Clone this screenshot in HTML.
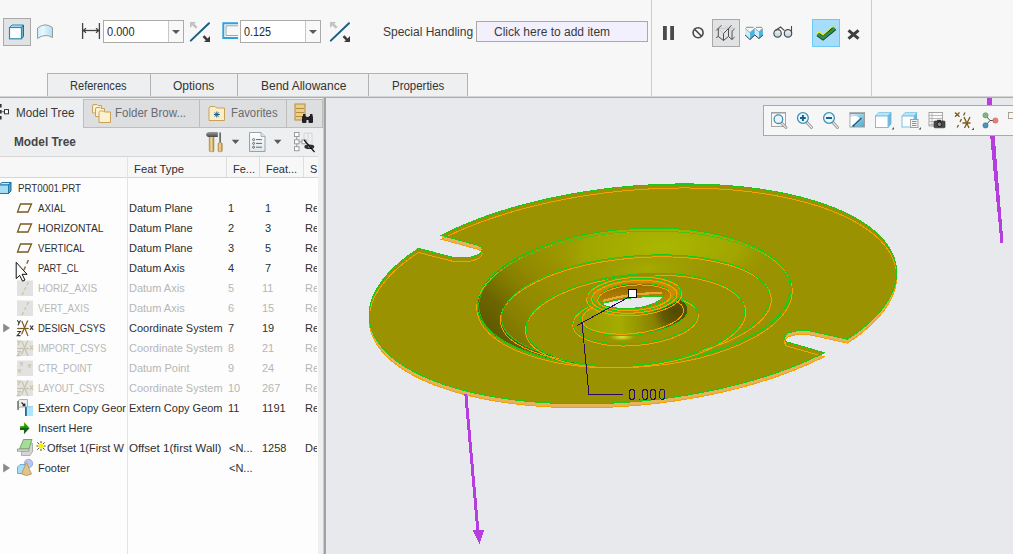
<!DOCTYPE html>
<html><head><meta charset="utf-8">
<style>
*{box-sizing:border-box;margin:0;padding:0}
html,body{width:1013px;height:554px;overflow:hidden;background:#f7f7f7;font-family:"Liberation Sans",sans-serif;color:#333;position:relative}
.a{position:absolute}
.t{position:absolute;white-space:nowrap;line-height:1}
svg{position:absolute;overflow:visible}
.inp{position:absolute;background:#fff;border:1px solid #ababab;height:23px}
.dd{position:absolute;top:0;right:0;width:15px;height:21px;border-left:1px solid #c8c8c8;background:#f8f8f8}
.dd:after{content:"";position:absolute;left:3px;top:9px;border-left:4px solid transparent;border-right:4px solid transparent;border-top:4px solid #5a5a5a}
.tab{position:absolute;top:73px;height:24px;background:#eeeff1;border:1px solid #b3b3b3;border-bottom:none}
</style></head><body>
<!-- ribbon left group -->
<div class="a" style="left:3px;top:18px;width:28px;height:28px;background:#e1e2e4;border:1px solid #a9a9a9"></div>
<svg width="1013" height="60" style="left:0;top:0">
  <!-- solid cube -->
  <path d="M9.5 27.5 L12 25 L23.5 25 L21.5 27.5 Z" fill="#b6e4f7" stroke="#2b8ab9" stroke-width="1"/>
  <path d="M21.5 27.5 L23.5 25 L23.5 36.5 L21.5 38.8 Z" fill="#6fb8d8" stroke="#1f6f98" stroke-width="1"/>
  <rect x="9.5" y="27.5" width="12" height="11.3" fill="#fff" stroke="#2b8ab9" stroke-width="1.2"/>
  <!-- surface -->
  <defs><linearGradient id="sg" x1="0" x2="1"><stop offset="0" stop-color="#c4ecfa"/><stop offset=".35" stop-color="#e9f8fd"/><stop offset="1" stop-color="#a9e0f5"/></linearGradient></defs>
  <path d="M37.5 28 Q45 22 52.5 27.5 L52.5 37.5 Q45 33 37.5 38.5 Z" fill="url(#sg)" stroke="#9a9a9a" stroke-width="1"/>
  <!-- dimension |<->| -->
  <g stroke="#444" stroke-width="1.3" fill="none">
    <line x1="82.6" y1="23" x2="82.6" y2="39"/>
    <line x1="99.4" y1="23" x2="99.4" y2="39"/>
    <line x1="83" y1="30.5" x2="99" y2="30.5"/>
    <path d="M86 28.2 L83.3 30.5 L86 32.8"/>
    <path d="M96 28.2 L98.7 30.5 L96 32.8"/>
  </g>
  <!-- flip icon 1 -->
  <g>
    <line x1="190.8" y1="40.6" x2="209" y2="23.2" stroke="#1b5f80" stroke-width="2" stroke-linecap="round"/>
    <path d="M190 22 L196 22 L194.3 23.7 L197.5 27 L195.7 28.8 L192.4 25.5 L190 28 Z" fill="#c2c2c2"/>
    <path d="M210 42 L204 42 L205.8 40.2 L202.6 37 L204.4 35.2 L207.6 38.4 L210 36 Z" fill="#3c3c3c"/>
  </g>
  <!-- thickness icon -->
  <path d="M238 23.3 L223.3 23.3 L223.3 38 L238 38" fill="none" stroke="#2aa3de" stroke-width="1.9"/>
  <path d="M238 25.8 L226 25.8 L226 35.5 L238 35.5" fill="none" stroke="#a5a5a5" stroke-width="1"/>
  <!-- flip icon 2 -->
  <g transform="translate(140 0)">
    <line x1="190.8" y1="40.6" x2="209" y2="23.2" stroke="#1b5f80" stroke-width="2" stroke-linecap="round"/>
    <path d="M190 22 L196 22 L194.3 23.7 L197.5 27 L195.7 28.8 L192.4 25.5 L190 28 Z" fill="#c2c2c2"/>
    <path d="M210 42 L204 42 L205.8 40.2 L202.6 37 L204.4 35.2 L207.6 38.4 L210 36 Z" fill="#3c3c3c"/>
  </g>
</svg>
<div class="inp" style="left:103px;top:20px;width:81px"><div class="dd"></div></div>
<div class="t" style="left:107px;top:26px;font-size:12px;color:#2a2a2a;transform:scaleX(.92);transform-origin:0 0">0.000</div>
<div class="inp" style="left:240px;top:20px;width:81px"><div class="dd"></div></div>
<div class="t" style="left:244px;top:26px;font-size:12px;color:#2a2a2a;transform:scaleX(.9);transform-origin:0 0">0.125</div>
<div class="t" style="left:383px;top:26px;font-size:12px;color:#3a3a3a">Special Handling</div>
<div class="a" style="left:476px;top:21px;width:172px;height:21px;background:#f3f0fd;border:1px solid #a9a9a9"></div>
<div class="t" style="left:494px;top:26px;font-size:12px;color:#3a3a3a">Click here to add item</div>
<div class="a" style="left:651px;top:0;width:1px;height:96px;background:#cdcdcd"></div>
<div class="a" style="left:871px;top:0;width:1px;height:96px;background:#cdcdcd"></div>
<!-- right group -->
<div class="a" style="left:712px;top:19px;width:28px;height:28px;background:#e1e2e4;border:1px solid #a9a9a9"></div>
<div class="a" style="left:812px;top:19px;width:28px;height:28px;background:#a6ddfa;border:1px solid #6cc8f4"></div>
<svg width="1013" height="60" style="left:0;top:0">
  <rect x="663" y="26" width="3.8" height="14" fill="#4a4a4a"/>
  <rect x="670.2" y="26" width="3.8" height="14" fill="#4a4a4a"/>
  <circle cx="698.1" cy="32.7" r="5" fill="none" stroke="#4a4a4a" stroke-width="1.6"/>
  <line x1="694.6" y1="29.2" x2="701.6" y2="36.2" stroke="#4a4a4a" stroke-width="1.6"/>
  <!-- wireframe icon -->
  <g stroke="#c4c4c4" stroke-width=".8" fill="none">
    <path d="M716.4 28.3 L734.6 28.3 M718.3 28.5 L723.5 33.5 M725 25.2 L729 29 M728.5 28.5 L732 31.3"/>
  </g>
  <g stroke="#505050" stroke-width="1" fill="none">
    <path d="M718.3 28.8 L718.3 36.5 L723.5 40.5 L728.5 36.5 L728.5 28.5 L723.5 33.5 L723.5 40.5"/>
    <path d="M716.2 30.5 L721.5 25.2 M728.5 28.5 L731.5 25.2 M716.2 37.8 L718.3 36.3 M728.5 36.5 L732 39.5 L732 31.3 L734.6 29 M732 39.5 L734.6 37"/>
  </g>
  <!-- blue icon -->
  <path d="M745.1 28.2 L750 32.6 L750 39.6 L745.1 35 Z" fill="#c6eefb"/>
  <path d="M750 32.6 L754.8 28.2 L754.8 35 L750 39.6 Z" fill="#46b6e8"/>
  <path d="M754.8 28.2 L759 31.8 L759 38.6 L754.8 35 Z" fill="#c6eefb"/>
  <path d="M759 31.8 L762.9 28.2 L762.9 35 L759 38.6 Z" fill="#46b6e8"/>
  <path d="M745.1 28.2 L750 32.6 L754.8 28.2 L759 31.8 L762.9 28.2" fill="none" stroke="#9a8c88" stroke-width=".7"/>
  <path d="M745.1 35 L750 39.6 L754.8 35 L759 38.6 L762.9 35" fill="none" stroke="#3a3a3a" stroke-width="1"/>
  <path d="M746 27.3 L753.5 27.3 M756 27.3 L762 27.3" stroke="#8a8a8a" stroke-width="1"/>
  <!-- glasses -->
  <defs><linearGradient id="gl" x1="0" y1="0" x2="0" y2="1"><stop offset="0" stop-color="#f2f6f8"/><stop offset="1" stop-color="#b8d3de"/></linearGradient></defs>
  <circle cx="777.6" cy="33.4" r="3.7" fill="url(#gl)" stroke="#4a4a4a" stroke-width="1.2"/>
  <circle cx="788" cy="33.4" r="3.7" fill="url(#gl)" stroke="#4a4a4a" stroke-width="1.2"/>
  <path d="M775 30.8 L780.5 27 L784.5 30.6" fill="none" stroke="#4a4a4a" stroke-width="1.1"/>
  <path d="M791.5 33.5 L791.5 26" fill="none" stroke="#4a4a4a" stroke-width="1.1"/>
  <!-- check -->
  <path d="M817.8 34.2 L823 38 L834.8 28.2" fill="none" stroke="#1c3a1c" stroke-width="4.4" stroke-linejoin="miter" stroke-linecap="butt"/>
  <path d="M817.8 34.2 L823 38 L834.8 28.2" fill="none" stroke="#2f9055" stroke-width="2.6" stroke-linejoin="miter"/>
  <path d="M816.6 32.6 L820 32.6 L823 35 L831.5 27 L835.8 27" fill="none" stroke="#dfee1e" stroke-width="1.1"/>
  <!-- X -->
  <path d="M848.5 30.3 L858.5 38.6 M858.5 30.3 L848.5 38.6" stroke="#3e3e3e" stroke-width="3"/>
</svg>
<!-- tabs -->
<div class="tab" style="left:47px;width:104px"></div>
<div class="tab" style="left:150px;width:88px"></div>
<div class="tab" style="left:237px;width:132px"></div>
<div class="tab" style="left:368px;width:100px"></div>
<div class="t" style="left:70px;top:80px;font-size:12px;color:#333;transform:scaleX(.922);transform-origin:0 0">References</div>
<div class="t" style="left:173px;top:80px;font-size:12px;color:#333">Options</div>
<div class="t" style="left:261px;top:80px;font-size:12px;color:#333">Bend Allowance</div>
<div class="t" style="left:392px;top:80px;font-size:12px;color:#333;transform:scaleX(.955);transform-origin:0 0">Properties</div>
<div class="a" style="left:0;top:96px;width:1013px;height:2px;background:#a9a9a9"></div>
<!-- left panel -->
<div class="a" style="left:0;top:98px;width:323px;height:456px;background:#eeeff1"></div>
<div class="a" style="left:323px;top:98px;width:1px;height:456px;background:#c9c9c9"></div>
<div class="a" style="left:324px;top:98px;width:2px;height:456px;background:#a3a3a3"></div>
<div class="a" style="left:0;top:97px;width:1013px;height:1px;background:#acacac"></div>
<div class="a" style="left:0;top:96px;width:1013px;height:1px;background:#d4d4d4"></div>
<!-- inactive tabs -->
<div class="a" style="left:83px;top:99px;width:240px;height:29px;background:#dcdee0;border:1px solid #bdbdbd;border-right:none"></div>
<div class="a" style="left:199px;top:99px;width:1px;height:29px;background:#bdbdbd"></div>
<div class="a" style="left:286px;top:99px;width:1px;height:29px;background:#bdbdbd"></div>
<div class="a" style="left:322px;top:99px;width:1px;height:29px;background:#bdbdbd"></div>
<div class="t" style="left:16px;top:107px;font-size:12px;color:#3a3a3a;transform:scaleX(.973);transform-origin:0 0">Model Tree</div>
<div class="t" style="left:115px;top:107px;font-size:12px;color:#6a6a72;transform:scaleX(.96);transform-origin:0 0">Folder Brow...</div>
<div class="t" style="left:231px;top:107px;font-size:12px;color:#6a6a72;transform:scaleX(.943);transform-origin:0 0">Favorites</div>
<div class="t" style="left:14px;top:136px;font-size:12px;font-weight:700;color:#454545;transform:scaleX(.987);transform-origin:0 0">Model Tree</div>
<svg width="330" height="160" style="left:0;top:0">
  <!-- tree icon (cut) -->
  <g fill="#333"><rect x="0" y="104" width="1.6" height="3.5"/><rect x="0" y="110" width="1.6" height="3.5"/><rect x="0" y="116" width="1.6" height="3.5"/></g>
  <line x1="1" y1="111.8" x2="4.5" y2="111.8" stroke="#555" stroke-width="1"/>
  <rect x="4.5" y="109.6" width="4" height="4.2" fill="#fff" stroke="#333" stroke-width="1"/>
  <!-- folders -->
  <g stroke="#c9a25a" stroke-width="1" fill="#fcf1cf">
    <path d="M92.5 106 Q92.5 104.5 94 104.5 L97 104.5 L98 105.5 L101.5 105.5 L101.5 113 L92.5 113 Z"/>
    <path d="M95.5 109 Q95.5 107.5 97 107.5 L100 107.5 L101 108.5 L104.5 108.5 L104.5 116.5 L95.5 116.5 Z"/>
    <path d="M99 112.5 Q99 111 100.5 111 L103.5 111 L104.5 112 L110.5 112 L110.5 122.5 L99 122.5 Z"/>
  </g>
  <!-- favorites folder -->
  <path d="M209 108.5 Q209 106.5 211 106.5 L215 106.5 L216.5 108 L224.5 108 L224.5 120.5 L209 120.5 Z" fill="#fcefc8" stroke="#c9a25a" stroke-width="1"/>
  <g stroke="#1d5f8a" stroke-width="1"><path d="M213.8 114.5 L219.8 114.5 M216.8 111.5 L216.8 117.5 M214.7 112.4 L218.9 116.6 M218.9 112.4 L214.7 116.6"/></g>
  <!-- cabinet+binoculars -->
  <rect x="295" y="104" width="10" height="16" fill="#e9cf8e" stroke="#b58e3c" stroke-width="1"/>
  <g stroke="#b58e3c" stroke-width="1"><line x1="296" y1="108.5" x2="304" y2="108.5"/><line x1="296" y1="112.5" x2="304" y2="112.5"/><line x1="296" y1="116.5" x2="304" y2="116.5"/></g>
  <g fill="#222"><rect x="302" y="116" width="4.5" height="7" rx="1"/><rect x="308.5" y="116" width="4.5" height="7" rx="1"/><rect x="305.5" y="117" width="4" height="3"/><rect x="303" y="114" width="2.5" height="3"/><rect x="310" y="114" width="2.5" height="3"/></g>
  <!-- hammer + screwdriver -->
  <defs><linearGradient id="wood" x1="0" x2="1"><stop offset="0" stop-color="#b8944a"/><stop offset=".45" stop-color="#f0dca0"/><stop offset="1" stop-color="#a8843a"/></linearGradient>
  <linearGradient id="metal" x1="0" y1="0" x2="0" y2="1"><stop offset="0" stop-color="#9a9a9a"/><stop offset="1" stop-color="#4a4a4a"/></linearGradient>
  <linearGradient id="paper" x1="0" y1="0" x2="0" y2="1"><stop offset="0" stop-color="#ffffff"/><stop offset="1" stop-color="#dfe8ec"/></linearGradient></defs>
  <rect x="209.2" y="136.5" width="4.8" height="15.2" rx="1" fill="url(#wood)" stroke="#a08040" stroke-width=".5"/>
  <path d="M206 134.5 Q206.5 132 209 132 L217.8 132 L217.8 136.9 L208 136.9 Q206.2 136.5 206 134.5 Z" fill="url(#metal)"/>
  <rect x="219.3" y="132.5" width="1.7" height="10.3" fill="#6a6a6a"/>
  <rect x="218" y="142.8" width="4.3" height="8.9" rx="1" fill="url(#wood)" stroke="#a08040" stroke-width=".5"/>
  <path d="M231.8 139.8 L239.3 139.8 L235.5 144 Z" fill="#5a5a5a"/>
  <!-- list icon -->
  <path d="M249.5 132.5 L261 132.5 L265 136.5 L265 151.5 L249.5 151.5 Z" fill="url(#paper)" stroke="#8e9a9e" stroke-width=".9"/>
  <path d="M261 132.5 L261 136.5 L265 136.5" fill="#d8e4ea" stroke="#8e9a9e" stroke-width=".7"/>
  <g stroke="#6a6a6a" stroke-width="1" fill="none"><circle cx="253.6" cy="139.6" r="1"/><circle cx="253.6" cy="143.4" r="1"/><circle cx="253.6" cy="147.2" r="1"/><line x1="256" y1="139.6" x2="262" y2="139.6"/><line x1="256" y1="143.4" x2="262" y2="143.4"/><line x1="256" y1="147.2" x2="262" y2="147.2"/></g>
  <path d="M274 139.8 L281.5 139.8 L277.7 144 Z" fill="#5a5a5a"/>
  <!-- tree-hide icon -->
  <g stroke="#d0d0d0" stroke-width=".8" fill="none"><path d="M304 133 L312 133 M308 133 L308 150 M312 133 L312 146 M304 133 L304 139"/></g>
  <g stroke="#9a9a9a" stroke-width="1" fill="#fff"><path d="M296.7 136.5 L296.7 146.7" fill="none"/><path d="M299 141.8 L302 141.8" fill="none"/><rect x="294.5" y="132.5" width="4.5" height="4"/><rect x="294.5" y="139.8" width="4.5" height="4"/><rect x="294.5" y="146.7" width="4.5" height="4"/><rect x="302" y="139.8" width="4" height="4"/></g>
  <ellipse cx="309.3" cy="146.7" rx="5" ry="2.3" fill="#333"/>
  <ellipse cx="309.3" cy="146.7" rx="1.3" ry="1" fill="#aaa"/>
  <line x1="304" y1="140" x2="314.5" y2="152" stroke="#111" stroke-width="1.2"/>
</svg>
<!-- table -->
<div class="a" style="left:0;top:156px;width:318px;height:398px;background:#fdfdfd"></div>
<div class="a" style="left:0;top:156px;width:318px;height:22px;background:#f7f7f8;border-top:1px solid #d6d6d6;border-bottom:1px solid #d6d6d6"></div>
<div class="a" style="left:127px;top:157px;width:1px;height:397px;background:#e3e3e3"></div>
<div class="a" style="left:226px;top:157px;width:1px;height:20px;background:#dedede"></div>
<div class="a" style="left:259px;top:157px;width:1px;height:20px;background:#dedede"></div>
<div class="a" style="left:303px;top:157px;width:1px;height:20px;background:#dedede"></div>
<div class="a" style="left:318px;top:156px;width:5px;height:398px;background:#eeeff1"></div>
<div class="t" style="left:134px;top:163.5px;font-size:11px;color:#2e2e2e;transform:scaleX(1.025);transform-origin:0 0">Feat Type</div>
<div class="t" style="left:233px;top:163.5px;font-size:11px;color:#2e2e2e">Fe...</div>
<div class="t" style="left:266px;top:163.5px;font-size:11px;color:#2e2e2e">Feat...</div>
<div class="t" style="left:310px;top:163.5px;font-size:11px;color:#2e2e2e;width:8px;overflow:hidden">S</div>
<div class="t" style="left:18px;top:182.7px;font-size:11px;color:#2f2f2f;transform:scaleX(0.886);transform-origin:0 0">PRT0001.PRT</div>
<div class="t" style="left:38px;top:202.7px;font-size:11px;color:#2f2f2f;transform:scaleX(0.885);transform-origin:0 0">AXIAL</div>
<div class="t" style="left:129px;top:202.7px;font-size:11px;color:#2f2f2f;width:98px;overflow:hidden">Datum Plane</div>
<div class="t" style="left:228px;top:202.7px;font-size:11px;color:#2f2f2f">1</div>
<div class="t" style="left:265px;top:202.7px;font-size:11px;color:#2f2f2f">1</div>
<div class="t" style="left:305px;top:202.7px;font-size:11px;color:#2f2f2f;width:12px;overflow:hidden">Re</div>
<div class="t" style="left:38px;top:222.7px;font-size:11px;color:#2f2f2f;transform:scaleX(0.934);transform-origin:0 0">HORIZONTAL</div>
<div class="t" style="left:129px;top:222.7px;font-size:11px;color:#2f2f2f;width:98px;overflow:hidden">Datum Plane</div>
<div class="t" style="left:228px;top:222.7px;font-size:11px;color:#2f2f2f">2</div>
<div class="t" style="left:265px;top:222.7px;font-size:11px;color:#2f2f2f">3</div>
<div class="t" style="left:305px;top:222.7px;font-size:11px;color:#2f2f2f;width:12px;overflow:hidden">Re</div>
<div class="t" style="left:38px;top:242.7px;font-size:11px;color:#2f2f2f;transform:scaleX(0.871);transform-origin:0 0">VERTICAL</div>
<div class="t" style="left:129px;top:242.7px;font-size:11px;color:#2f2f2f;width:98px;overflow:hidden">Datum Plane</div>
<div class="t" style="left:228px;top:242.7px;font-size:11px;color:#2f2f2f">3</div>
<div class="t" style="left:265px;top:242.7px;font-size:11px;color:#2f2f2f">5</div>
<div class="t" style="left:305px;top:242.7px;font-size:11px;color:#2f2f2f;width:12px;overflow:hidden">Re</div>
<div class="t" style="left:38px;top:262.7px;font-size:11px;color:#2f2f2f;transform:scaleX(0.837);transform-origin:0 0">PART_CL</div>
<div class="t" style="left:129px;top:262.7px;font-size:11px;color:#2f2f2f;width:98px;overflow:hidden">Datum Axis</div>
<div class="t" style="left:228px;top:262.7px;font-size:11px;color:#2f2f2f">4</div>
<div class="t" style="left:265px;top:262.7px;font-size:11px;color:#2f2f2f">7</div>
<div class="t" style="left:305px;top:262.7px;font-size:11px;color:#2f2f2f;width:12px;overflow:hidden">Re</div>
<div class="t" style="left:38px;top:282.7px;font-size:11px;color:#b6b6b6;transform:scaleX(0.904);transform-origin:0 0">HORIZ_AXIS</div>
<div class="t" style="left:129px;top:282.7px;font-size:11px;color:#b6b6b6;width:98px;overflow:hidden">Datum Axis</div>
<div class="t" style="left:228px;top:282.7px;font-size:11px;color:#b6b6b6">5</div>
<div class="t" style="left:262px;top:282.7px;font-size:11px;color:#b6b6b6">11</div>
<div class="t" style="left:305px;top:282.7px;font-size:11px;color:#b6b6b6;width:12px;overflow:hidden">Re</div>
<div class="t" style="left:38px;top:302.7px;font-size:11px;color:#b6b6b6;transform:scaleX(0.847);transform-origin:0 0">VERT_AXIS</div>
<div class="t" style="left:129px;top:302.7px;font-size:11px;color:#b6b6b6;width:98px;overflow:hidden">Datum Axis</div>
<div class="t" style="left:228px;top:302.7px;font-size:11px;color:#b6b6b6">6</div>
<div class="t" style="left:262px;top:302.7px;font-size:11px;color:#b6b6b6">15</div>
<div class="t" style="left:305px;top:302.7px;font-size:11px;color:#b6b6b6;width:12px;overflow:hidden">Re</div>
<div class="t" style="left:38px;top:322.7px;font-size:11px;color:#2f2f2f;transform:scaleX(0.861);transform-origin:0 0">DESIGN_CSYS</div>
<div class="t" style="left:129px;top:322.7px;font-size:11px;color:#2f2f2f;width:98px;overflow:hidden">Coordinate System</div>
<div class="t" style="left:228px;top:322.7px;font-size:11px;color:#2f2f2f">7</div>
<div class="t" style="left:262px;top:322.7px;font-size:11px;color:#2f2f2f">19</div>
<div class="t" style="left:305px;top:322.7px;font-size:11px;color:#2f2f2f;width:12px;overflow:hidden">Re</div>
<div class="t" style="left:38px;top:342.7px;font-size:11px;color:#b6b6b6;transform:scaleX(0.869);transform-origin:0 0">IMPORT_CSYS</div>
<div class="t" style="left:129px;top:342.7px;font-size:11px;color:#b6b6b6;width:98px;overflow:hidden">Coordinate System</div>
<div class="t" style="left:228px;top:342.7px;font-size:11px;color:#b6b6b6">8</div>
<div class="t" style="left:262px;top:342.7px;font-size:11px;color:#b6b6b6">21</div>
<div class="t" style="left:305px;top:342.7px;font-size:11px;color:#b6b6b6;width:12px;overflow:hidden">Re</div>
<div class="t" style="left:38px;top:362.7px;font-size:11px;color:#b6b6b6;transform:scaleX(0.873);transform-origin:0 0">CTR_POINT</div>
<div class="t" style="left:129px;top:362.7px;font-size:11px;color:#b6b6b6;width:98px;overflow:hidden">Datum Point</div>
<div class="t" style="left:228px;top:362.7px;font-size:11px;color:#b6b6b6">9</div>
<div class="t" style="left:262px;top:362.7px;font-size:11px;color:#b6b6b6">24</div>
<div class="t" style="left:305px;top:362.7px;font-size:11px;color:#b6b6b6;width:12px;overflow:hidden">Re</div>
<div class="t" style="left:38px;top:382.7px;font-size:11px;color:#b6b6b6;transform:scaleX(0.836);transform-origin:0 0">LAYOUT_CSYS</div>
<div class="t" style="left:129px;top:382.7px;font-size:11px;color:#b6b6b6;width:98px;overflow:hidden">Coordinate System</div>
<div class="t" style="left:228px;top:382.7px;font-size:11px;color:#b6b6b6">10</div>
<div class="t" style="left:262px;top:382.7px;font-size:11px;color:#b6b6b6">267</div>
<div class="t" style="left:305px;top:382.7px;font-size:11px;color:#b6b6b6;width:12px;overflow:hidden">Re</div>
<div class="t" style="left:38px;top:402.7px;font-size:11px;color:#2f2f2f;width:89px;overflow:hidden">Extern Copy Geor</div>
<div class="t" style="left:129px;top:402.7px;font-size:11px;color:#2f2f2f;width:98px;overflow:hidden">Extern Copy Geom</div>
<div class="t" style="left:228px;top:402.7px;font-size:11px;color:#2f2f2f">11</div>
<div class="t" style="left:262px;top:402.7px;font-size:11px;color:#2f2f2f">1191</div>
<div class="t" style="left:305px;top:402.7px;font-size:11px;color:#2f2f2f;width:12px;overflow:hidden">Re</div>
<div class="t" style="left:38px;top:422.7px;font-size:11px;color:#2f2f2f;width:89px;overflow:hidden">Insert Here</div>
<div class="t" style="left:47px;top:442.7px;font-size:11px;color:#2f2f2f;width:80px;overflow:hidden">Offset 1(First W</div>
<div class="t" style="left:129px;top:442.7px;font-size:11px;color:#2f2f2f;width:98px;overflow:hidden;transform:scaleX(1.057);transform-origin:0 0">Offset 1(first Wall)</div>
<div class="t" style="left:229px;top:442.7px;font-size:11px;color:#2f2f2f">&lt;N...</div>
<div class="t" style="left:262px;top:442.7px;font-size:11px;color:#2f2f2f">1258</div>
<div class="t" style="left:305px;top:442.7px;font-size:11px;color:#2f2f2f;width:12px;overflow:hidden">De</div>
<div class="t" style="left:38px;top:462.7px;font-size:11px;color:#2f2f2f;width:89px;overflow:hidden">Footer</div>
<div class="t" style="left:229px;top:462.7px;font-size:11px;color:#2f2f2f">&lt;N...</div>
<svg width="330" height="554" style="left:0;top:0"><path d="M-1 185 L2 182.5 L11 182.5 L8.5 185 Z" fill="#c9ecfa" stroke="#2379a8" stroke-width="1"/>
<path d="M8.5 185 L11 182.5 L11 191 L8.5 193.5 Z" fill="#4aa6d2" stroke="#1d6a96" stroke-width="1"/>
<rect x="-1" y="185" width="9.5" height="8.5" fill="#a6dcf4" stroke="#2379a8" stroke-width="1"/>
<path d="M20.5 204 L31.5 204 L28 212 L17.5 212 Z" fill="none" stroke="#7a5a22" stroke-width="1.3"/>
<path d="M20.5 224 L31.5 224 L28 232 L17.5 232 Z" fill="none" stroke="#7a5a22" stroke-width="1.3"/>
<path d="M20.5 244 L31.5 244 L28 252 L17.5 252 Z" fill="none" stroke="#7a5a22" stroke-width="1.3"/>
<path d="M28.4 260 L26.8 263.7 M25.5 266.5 L23.9 269.8" stroke="#8a6a2a" stroke-width="1.5"/>
<rect x="17" y="280.5" width="16" height="15.5" fill="#e2e2e2"/><path d="M28.5 282 L27 285 M26 287 L24.5 290 M23.5 292 L22 295" stroke="#cfc9a8" stroke-width="1.6"/>
<rect x="17" y="300.5" width="16" height="15.5" fill="#e2e2e2"/><path d="M28.5 302 L27 305 M26 307 L24.5 310 M23.5 312 L22 315" stroke="#cfc9a8" stroke-width="1.6"/>
<g stroke="#7d5a22" stroke-width="1.2" fill="none"><line x1="17.2" y1="328.5" x2="28.8" y2="328.5"/><line x1="21.8" y1="321" x2="28" y2="336"/><line x1="27.8" y1="320.5" x2="21.5" y2="334.5"/></g>
<g stroke="#333" stroke-width="1.1" fill="none"><path d="M17.3 320.3 L18.9 322.8 M20.5 320.3 L18 325.2"/><path d="M17.2 331.5 L20.4 331.5 L17.2 335.6 L20.6 335.6"/><path d="M30 325.5 L33.2 329.8 M33.2 325.5 L30 329.8"/></g>
<path d="M3.2 323.5 L10 328 L3.2 332.5 Z" fill="#8a8a8a"/>
<rect x="17" y="340.5" width="16" height="15.5" fill="#e2e2e2"/><g stroke="#c8c3a6" stroke-width="1.2" fill="none"><line x1="17.2" y1="348.5" x2="28.8" y2="348.5"/><line x1="21.8" y1="341" x2="28" y2="356"/><line x1="27.8" y1="340.5" x2="21.5" y2="354.5"/></g>
<g stroke="#c8c3a6" stroke-width="1.1" fill="none"><path d="M17.3 340.3 L18.9 342.8 M20.5 340.3 L18 345.2"/><path d="M17.2 351.5 L20.4 351.5 L17.2 355.6 L20.6 355.6"/><path d="M30 345.5 L33.2 349.8 M33.2 345.5 L30 349.8"/></g>
<rect x="17" y="360.5" width="16" height="15.5" fill="#e2e2e2"/><g stroke="#c8c3a6" stroke-width="1.4"><path d="M20 362.5 L23 365.5 M23 362.5 L20 365.5"/><path d="M28 364.5 L31 367.5 M31 364.5 L28 367.5"/><path d="M18 369.5 L21 372.5 M21 369.5 L18 372.5"/></g>
<rect x="17" y="380.5" width="16" height="15.5" fill="#e2e2e2"/><g stroke="#c8c3a6" stroke-width="1.2" fill="none"><line x1="17.2" y1="388.5" x2="28.8" y2="388.5"/><line x1="21.8" y1="381" x2="28" y2="396"/><line x1="27.8" y1="380.5" x2="21.5" y2="394.5"/></g>
<g stroke="#c8c3a6" stroke-width="1.1" fill="none"><path d="M17.3 380.3 L18.9 382.8 M20.5 380.3 L18 385.2"/><path d="M17.2 391.5 L20.4 391.5 L17.2 395.6 L20.6 395.6"/><path d="M30 385.5 L33.2 389.8 M33.2 385.5 L30 389.8"/></g>
<path d="M18 401 L20 399.5 L27.5 399.5 L27.5 407 L20 407 L18 408.5 Z" fill="#ededed" stroke="#9a9a9a" stroke-width=".8"/>
<rect x="17.3" y="401" width="1.6" height="9" fill="#7a7a7a"/>
<path d="M21.5 402.5 L24.5 405.5 M24.8 403.5 L24.8 405.8 L22.5 405.8" stroke="#222" stroke-width="1.1" fill="none"/>
<rect x="25" y="406.5" width="8" height="9.5" fill="#aee6fa"/><rect x="25" y="406.5" width="1.8" height="9.5" fill="#1e6d95"/><line x1="25" y1="406.7" x2="33" y2="406.7" stroke="#7fc3e0" stroke-width=".8"/>
<path d="M20 426 L24 426 L24 422 L29.5 428 L24 434 L24 430 L20 430 Z" fill="#0f9a12" stroke="#d8f040" stroke-width=".5"/><path d="M20 428 L29.5 428 L24 434 L24 430 L20 430 Z" fill="#1f5f1f"/>
<path d="M22 447 L24.5 443.5 L32.5 443.5 L32.5 451.5 L30 455.5 L21.5 455.5 L21.5 453.5 Z" fill="#d6d6d6" stroke="#a0a0a0" stroke-width=".8"/>
<path d="M19.5 449 L23.5 439.5 L32 439.5 L29 449 Z" fill="#a6dc98" stroke="#5a9a4a" stroke-width=".8"/>
<rect x="17.5" y="449" width="11.5" height="2.2" fill="#d8d8d8" stroke="#8a8a8a" stroke-width=".7"/>
<g stroke="#222" stroke-width=".8"><path d="M37.3 442.3 L39.3 444.3 M44.7 442.3 L42.7 444.3 M37.3 449.7 L39.3 447.7 M44.7 449.7 L42.7 447.7 M41 441 L41 443 M41 449 L41 451 M36.5 446 L38.5 446 M43.5 446 L45.5 446"/></g><circle cx="41" cy="446" r="2.7" fill="#f8f000"/>
<path d="M17.5 467 L20 464.5 L27 464.5 L27 473.5 L17.5 473.5 Z" fill="#a8dcf2" stroke="#5aa0c8" stroke-width=".8"/>
<circle cx="28.5" cy="463.5" r="4.2" fill="#b9c6f0" stroke="#7b8ccc" stroke-width=".6"/>
<path d="M26.5 462.5 L31.5 474 Q26.5 477 21.5 474 Z" fill="#e2c48a" stroke="#a88a50" stroke-width=".7"/>
<path d="M3.2 463.5 L10 468 L3.2 472.5 Z" fill="#8a8a8a"/>
<path d="M16.2 262.3 L16.2 278.6 L19.6 275.4 L22.6 281.2 L25 280 L22.1 274.3 L27 274.3 Z" fill="#fff" stroke="#111" stroke-width="1" stroke-linejoin="round"/></svg>
<svg width="687" height="456" style="left:326px;top:98px" viewBox="326 98 687 456" shape-rendering="crispEdges">
<rect x="326" y="98" width="687" height="456" fill="#e8e9ed"/>
<defs>
<radialGradient id="hiA" gradientUnits="userSpaceOnUse" cx="665" cy="248" r="130" gradientTransform="translate(665 248) scale(1 .45) translate(-665 -248)">
 <stop offset="0" stop-color="#aab800" stop-opacity="1"/><stop offset=".6" stop-color="#a4ae00" stop-opacity=".7"/><stop offset="1" stop-color="#9a9200" stop-opacity="0"/></radialGradient>
<linearGradient id="dkA" gradientUnits="userSpaceOnUse" x1="488" y1="338" x2="575" y2="252">
 <stop offset="0" stop-color="#5a5400" stop-opacity="1"/><stop offset=".3" stop-color="#666000" stop-opacity=".9"/><stop offset=".65" stop-color="#807800" stop-opacity=".4"/><stop offset="1" stop-color="#9a9200" stop-opacity="0"/></linearGradient>
<linearGradient id="dkB" gradientUnits="userSpaceOnUse" x1="510" y1="345" x2="590" y2="280">
 <stop offset="0" stop-color="#766e00" stop-opacity="1"/><stop offset=".45" stop-color="#8a8200" stop-opacity=".6"/><stop offset="1" stop-color="#9a9200" stop-opacity="0"/></linearGradient>
<radialGradient id="hiB" gradientUnits="userSpaceOnUse" cx="650" cy="270" r="110" gradientTransform="translate(650 270) scale(1 .4) translate(-650 -270)">
 <stop offset="0" stop-color="#a4ae00" stop-opacity=".9"/><stop offset="1" stop-color="#9a9200" stop-opacity="0"/></radialGradient>
<linearGradient id="cone" gradientUnits="userSpaceOnUse" x1="575" y1="0" x2="700" y2="0">
 <stop offset="0" stop-color="#9a9800"/><stop offset=".35" stop-color="#a4ac00"/><stop offset=".6" stop-color="#8c8600"/><stop offset=".85" stop-color="#625a00"/><stop offset="1" stop-color="#7a7000"/></linearGradient>
<radialGradient id="glow" gradientUnits="userSpaceOnUse" cx="622" cy="337" r="14" gradientTransform="translate(622 337) scale(1 .3) translate(-622 -337)">
 <stop offset="0" stop-color="#d0f040" stop-opacity="1"/><stop offset=".5" stop-color="#b8d020" stop-opacity=".7"/><stop offset="1" stop-color="#a8b000" stop-opacity="0"/></radialGradient>
<linearGradient id="wall" gradientUnits="userSpaceOnUse" x1="0" y1="280" x2="0" y2="300">
 <stop offset="0" stop-color="#8a6400"/><stop offset="1" stop-color="#b88400"/></linearGradient>
<radialGradient id="dark" cx=".5" cy=".5" r=".5"><stop offset="0" stop-color="#504600" stop-opacity=".95"/><stop offset=".6" stop-color="#5a5000" stop-opacity=".7"/><stop offset="1" stop-color="#6a6000" stop-opacity="0"/></radialGradient>
</defs>
<path d="M441.43 235.28 L444.87 233.54 L448.37 231.83 L451.94 230.14 L455.57 228.47 L459.27 226.82 L463.02 225.20 L466.84 223.60 L470.71 222.03 L474.65 220.48 L478.63 218.95 L482.68 217.46 L486.77 215.99 L490.92 214.55 L495.12 213.13 L499.36 211.75 L503.65 210.39 L507.99 209.06 L512.37 207.77 L516.80 206.50 L521.26 205.26 L525.77 204.06 L530.31 202.89 L534.89 201.75 L539.50 200.64 L544.15 199.56 L548.82 198.52 L553.53 197.51 L558.27 196.54 L563.03 195.59 L567.81 194.69 L572.62 193.82 L577.45 192.98 L582.30 192.18 L587.17 191.42 L592.05 190.69 L596.95 190.00 L601.86 189.34 L606.78 188.72 L611.71 188.14 L616.65 187.60 L621.60 187.09 L626.54 186.62 L631.49 186.19 L636.44 185.80 L641.39 185.45 L646.34 185.13 L651.28 184.85 L656.22 184.61 L661.14 184.41 L666.06 184.25 L670.97 184.12 L675.86 184.04 L680.74 183.99 L685.60 183.98 L690.44 184.01 L695.26 184.08 L700.06 184.19 L704.83 184.34 L709.58 184.52 L714.31 184.75 L719.00 185.01 L723.66 185.31 L728.30 185.65 L732.89 186.02 L737.46 186.44 L741.98 186.89 L746.47 187.38 L750.92 187.91 L755.33 188.48 L759.69 189.08 L764.01 189.72 L768.28 190.40 L772.50 191.11 L776.68 191.86 L780.80 192.64 L784.88 193.46 L788.89 194.32 L792.86 195.21 L796.77 196.14 L800.62 197.10 L804.41 198.09 L808.14 199.12 L811.81 200.18 L815.41 201.28 L818.95 202.41 L822.43 203.57 L825.84 204.76 L829.18 205.98 L832.45 207.23 L835.65 208.52 L838.78 209.83 L841.84 211.18 L844.82 212.55 L847.73 213.95 L850.56 215.38 L853.32 216.84 L856.00 218.33 L858.60 219.84 L861.12 221.38 L863.56 222.94 L865.92 224.53 L868.20 226.14 L870.39 227.78 L872.50 229.44 L874.53 231.12 L876.47 232.82 L878.32 234.55 L880.09 236.30 L881.77 238.07 L883.36 239.85 L884.87 241.66 L886.29 243.48 L887.61 245.33 L888.85 247.19 L890.00 249.06 L891.05 250.95 L892.02 252.86 L892.89 254.78 L893.68 256.72 L894.37 258.67 L894.97 260.63 L895.47 262.60 L895.89 264.58 L896.21 266.58 L896.44 268.58 L896.57 270.59 L896.61 272.61 L896.56 274.64 L896.42 276.68 L896.18 278.72 L895.85 280.76 L895.43 282.82 L894.92 284.87 L894.31 286.93 L893.61 288.99 L892.82 291.05 L891.94 293.11 L890.97 295.18 L889.90 297.24 L888.75 299.30 L887.50 301.36 L886.17 303.42 L884.74 305.47 L883.23 307.52 L881.63 309.57 L879.94 311.61 L878.16 313.64 L876.30 315.67 L874.35 317.69 L872.32 319.70 L870.20 321.70 L868.00 323.69 L865.72 325.67 L863.35 327.64 L860.90 329.60 L858.38 331.54 L855.77 333.48 L853.08 335.39 L850.32 337.30 L847.48 339.19 L812 331.3 Q800.2 328.8 788.3 332.8 Q782.5 336.5 785.9 341.7 L824.06 352.68 L820.61 354.42 L817.10 356.13 L813.53 357.82 L809.89 359.49 L806.19 361.13 L802.42 362.75 L798.60 364.35 L794.72 365.92 L790.78 367.47 L786.79 368.99 L782.74 370.48 L778.64 371.95 L774.49 373.39 L770.29 374.80 L766.04 376.18 L761.75 377.53 L757.40 378.86 L753.02 380.15 L748.59 381.42 L744.12 382.65 L739.61 383.85 L735.07 385.02 L730.48 386.16 L725.87 387.26 L721.22 388.34 L716.54 389.38 L711.83 390.38 L707.09 391.35 L702.33 392.29 L697.54 393.19 L692.73 394.06 L687.90 394.89 L683.05 395.69 L678.18 396.45 L673.29 397.18 L668.39 397.86 L663.48 398.52 L658.56 399.13 L653.63 399.71 L648.69 400.25 L643.74 400.75 L638.80 401.22 L633.85 401.64 L628.90 402.03 L623.95 402.39 L619.00 402.70 L614.06 402.97 L609.12 403.21 L604.20 403.41 L599.28 403.57 L594.38 403.69 L589.49 403.77 L584.61 403.81 L579.75 403.82 L574.91 403.78 L570.10 403.71 L565.30 403.60 L560.53 403.45 L555.78 403.26 L551.06 403.03 L546.37 402.77 L541.70 402.46 L537.08 402.12 L532.48 401.74 L527.92 401.32 L523.40 400.86 L518.91 400.37 L514.47 399.84 L510.07 399.27 L505.71 398.66 L501.39 398.02 L497.13 397.34 L492.91 396.62 L488.74 395.87 L484.62 395.08 L480.55 394.26 L476.53 393.40 L472.58 392.50 L468.67 391.57 L464.83 390.61 L461.04 389.61 L457.32 388.58 L453.66 387.52 L450.06 386.42 L446.52 385.29 L443.05 384.12 L439.65 382.93 L436.32 381.70 L433.05 380.45 L429.86 379.16 L426.73 377.84 L423.68 376.50 L420.70 375.12 L417.80 373.71 L414.98 372.28 L412.23 370.82 L409.56 369.33 L406.96 367.82 L404.45 366.28 L402.02 364.71 L399.67 363.12 L397.40 361.51 L395.21 359.87 L393.11 358.21 L391.09 356.52 L389.16 354.82 L387.31 353.09 L385.55 351.34 L383.88 349.57 L382.29 347.78 L380.79 345.97 L379.39 344.15 L378.07 342.30 L376.84 340.44 L375.70 338.56 L374.65 336.67 L373.69 334.76 L372.83 332.84 L372.05 330.90 L371.37 328.95 L370.78 326.99 L370.28 325.02 L369.88 323.03 L369.57 321.04 L369.35 319.03 L369.22 317.02 L369.19 315.00 L369.25 312.97 L369.40 310.93 L369.64 308.89 L369.98 306.85 L370.41 304.79 L370.93 302.74 L371.55 300.68 L372.26 298.62 L373.06 296.56 L373.95 294.49 L374.93 292.43 L376.00 290.37 L377.17 288.31 L378.42 286.25 L379.76 284.19 L381.19 282.14 L382.72 280.09 L384.33 278.04 L386.02 276.00 L387.81 273.97 L389.68 271.94 L391.63 269.93 L393.67 267.92 L395.80 265.92 L398.01 263.93 L400.30 261.95 L402.67 259.98 L405.13 258.02 L407.66 256.08 L410.28 254.15 L412.97 252.23 L415.74 250.33 L418.59 248.44 L453.8 257.6 L467.5 257.6 Q479.5 256.1 481.9 250.5 Q483 247 477.5 245.2 Z" transform="translate(0 4)" fill="#e6b25a"/>
<path d="M441.43 235.28 L444.87 233.54 L448.37 231.83 L451.94 230.14 L455.57 228.47 L459.27 226.82 L463.02 225.20 L466.84 223.60 L470.71 222.03 L474.65 220.48 L478.63 218.95 L482.68 217.46 L486.77 215.99 L490.92 214.55 L495.12 213.13 L499.36 211.75 L503.65 210.39 L507.99 209.06 L512.37 207.77 L516.80 206.50 L521.26 205.26 L525.77 204.06 L530.31 202.89 L534.89 201.75 L539.50 200.64 L544.15 199.56 L548.82 198.52 L553.53 197.51 L558.27 196.54 L563.03 195.59 L567.81 194.69 L572.62 193.82 L577.45 192.98 L582.30 192.18 L587.17 191.42 L592.05 190.69 L596.95 190.00 L601.86 189.34 L606.78 188.72 L611.71 188.14 L616.65 187.60 L621.60 187.09 L626.54 186.62 L631.49 186.19 L636.44 185.80 L641.39 185.45 L646.34 185.13 L651.28 184.85 L656.22 184.61 L661.14 184.41 L666.06 184.25 L670.97 184.12 L675.86 184.04 L680.74 183.99 L685.60 183.98 L690.44 184.01 L695.26 184.08 L700.06 184.19 L704.83 184.34 L709.58 184.52 L714.31 184.75 L719.00 185.01 L723.66 185.31 L728.30 185.65 L732.89 186.02 L737.46 186.44 L741.98 186.89 L746.47 187.38 L750.92 187.91 L755.33 188.48 L759.69 189.08 L764.01 189.72 L768.28 190.40 L772.50 191.11 L776.68 191.86 L780.80 192.64 L784.88 193.46 L788.89 194.32 L792.86 195.21 L796.77 196.14 L800.62 197.10 L804.41 198.09 L808.14 199.12 L811.81 200.18 L815.41 201.28 L818.95 202.41 L822.43 203.57 L825.84 204.76 L829.18 205.98 L832.45 207.23 L835.65 208.52 L838.78 209.83 L841.84 211.18 L844.82 212.55 L847.73 213.95 L850.56 215.38 L853.32 216.84 L856.00 218.33 L858.60 219.84 L861.12 221.38 L863.56 222.94 L865.92 224.53 L868.20 226.14 L870.39 227.78 L872.50 229.44 L874.53 231.12 L876.47 232.82 L878.32 234.55 L880.09 236.30 L881.77 238.07 L883.36 239.85 L884.87 241.66 L886.29 243.48 L887.61 245.33 L888.85 247.19 L890.00 249.06 L891.05 250.95 L892.02 252.86 L892.89 254.78 L893.68 256.72 L894.37 258.67 L894.97 260.63 L895.47 262.60 L895.89 264.58 L896.21 266.58 L896.44 268.58 L896.57 270.59 L896.61 272.61 L896.56 274.64 L896.42 276.68 L896.18 278.72 L895.85 280.76 L895.43 282.82 L894.92 284.87 L894.31 286.93 L893.61 288.99 L892.82 291.05 L891.94 293.11 L890.97 295.18 L889.90 297.24 L888.75 299.30 L887.50 301.36 L886.17 303.42 L884.74 305.47 L883.23 307.52 L881.63 309.57 L879.94 311.61 L878.16 313.64 L876.30 315.67 L874.35 317.69 L872.32 319.70 L870.20 321.70 L868.00 323.69 L865.72 325.67 L863.35 327.64 L860.90 329.60 L858.38 331.54 L855.77 333.48 L853.08 335.39 L850.32 337.30 L847.48 339.19 L812 331.3 Q800.2 328.8 788.3 332.8 Q782.5 336.5 785.9 341.7 L824.06 352.68 L820.61 354.42 L817.10 356.13 L813.53 357.82 L809.89 359.49 L806.19 361.13 L802.42 362.75 L798.60 364.35 L794.72 365.92 L790.78 367.47 L786.79 368.99 L782.74 370.48 L778.64 371.95 L774.49 373.39 L770.29 374.80 L766.04 376.18 L761.75 377.53 L757.40 378.86 L753.02 380.15 L748.59 381.42 L744.12 382.65 L739.61 383.85 L735.07 385.02 L730.48 386.16 L725.87 387.26 L721.22 388.34 L716.54 389.38 L711.83 390.38 L707.09 391.35 L702.33 392.29 L697.54 393.19 L692.73 394.06 L687.90 394.89 L683.05 395.69 L678.18 396.45 L673.29 397.18 L668.39 397.86 L663.48 398.52 L658.56 399.13 L653.63 399.71 L648.69 400.25 L643.74 400.75 L638.80 401.22 L633.85 401.64 L628.90 402.03 L623.95 402.39 L619.00 402.70 L614.06 402.97 L609.12 403.21 L604.20 403.41 L599.28 403.57 L594.38 403.69 L589.49 403.77 L584.61 403.81 L579.75 403.82 L574.91 403.78 L570.10 403.71 L565.30 403.60 L560.53 403.45 L555.78 403.26 L551.06 403.03 L546.37 402.77 L541.70 402.46 L537.08 402.12 L532.48 401.74 L527.92 401.32 L523.40 400.86 L518.91 400.37 L514.47 399.84 L510.07 399.27 L505.71 398.66 L501.39 398.02 L497.13 397.34 L492.91 396.62 L488.74 395.87 L484.62 395.08 L480.55 394.26 L476.53 393.40 L472.58 392.50 L468.67 391.57 L464.83 390.61 L461.04 389.61 L457.32 388.58 L453.66 387.52 L450.06 386.42 L446.52 385.29 L443.05 384.12 L439.65 382.93 L436.32 381.70 L433.05 380.45 L429.86 379.16 L426.73 377.84 L423.68 376.50 L420.70 375.12 L417.80 373.71 L414.98 372.28 L412.23 370.82 L409.56 369.33 L406.96 367.82 L404.45 366.28 L402.02 364.71 L399.67 363.12 L397.40 361.51 L395.21 359.87 L393.11 358.21 L391.09 356.52 L389.16 354.82 L387.31 353.09 L385.55 351.34 L383.88 349.57 L382.29 347.78 L380.79 345.97 L379.39 344.15 L378.07 342.30 L376.84 340.44 L375.70 338.56 L374.65 336.67 L373.69 334.76 L372.83 332.84 L372.05 330.90 L371.37 328.95 L370.78 326.99 L370.28 325.02 L369.88 323.03 L369.57 321.04 L369.35 319.03 L369.22 317.02 L369.19 315.00 L369.25 312.97 L369.40 310.93 L369.64 308.89 L369.98 306.85 L370.41 304.79 L370.93 302.74 L371.55 300.68 L372.26 298.62 L373.06 296.56 L373.95 294.49 L374.93 292.43 L376.00 290.37 L377.17 288.31 L378.42 286.25 L379.76 284.19 L381.19 282.14 L382.72 280.09 L384.33 278.04 L386.02 276.00 L387.81 273.97 L389.68 271.94 L391.63 269.93 L393.67 267.92 L395.80 265.92 L398.01 263.93 L400.30 261.95 L402.67 259.98 L405.13 258.02 L407.66 256.08 L410.28 254.15 L412.97 252.23 L415.74 250.33 L418.59 248.44 L453.8 257.6 L467.5 257.6 Q479.5 256.1 481.9 250.5 Q483 247 477.5 245.2 Z" fill="#9a9200"/>
<path d="M441.5 235.5 L477.5 245.2 Q483 247 481.9 250.5 L481.9 254.5 Q483 251 477.5 249.2 L441.5 239.5 Z" fill="#e6b25a"/>
<path d="M847.1 338.7 L812 331.3 Q800.2 328.8 788.3 332.8 Q782.5 336.5 785.9 341.7 L785.9 345.7 Q782.5 340.5 788.3 336.8 Q800.2 332.8 812 335.3 L847.1 342.7 Z" fill="#e6b25a"/>
<path d="M441.43 235.28 L444.87 233.54 L448.37 231.83 L451.94 230.14 L455.57 228.47 L459.27 226.82 L463.02 225.20 L466.84 223.60 L470.71 222.03 L474.65 220.48 L478.63 218.95 L482.68 217.46 L486.77 215.99 L490.92 214.55 L495.12 213.13 L499.36 211.75 L503.65 210.39 L507.99 209.06 L512.37 207.77 L516.80 206.50 L521.26 205.26 L525.77 204.06 L530.31 202.89 L534.89 201.75 L539.50 200.64 L544.15 199.56 L548.82 198.52 L553.53 197.51 L558.27 196.54 L563.03 195.59 L567.81 194.69 L572.62 193.82 L577.45 192.98 L582.30 192.18 L587.17 191.42 L592.05 190.69 L596.95 190.00 L601.86 189.34 L606.78 188.72 L611.71 188.14 L616.65 187.60 L621.60 187.09 L626.54 186.62 L631.49 186.19 L636.44 185.80 L641.39 185.45 L646.34 185.13 L651.28 184.85 L656.22 184.61 L661.14 184.41 L666.06 184.25 L670.97 184.12 L675.86 184.04 L680.74 183.99 L685.60 183.98 L690.44 184.01 L695.26 184.08 L700.06 184.19 L704.83 184.34 L709.58 184.52 L714.31 184.75 L719.00 185.01 L723.66 185.31 L728.30 185.65 L732.89 186.02 L737.46 186.44 L741.98 186.89 L746.47 187.38 L750.92 187.91 L755.33 188.48 L759.69 189.08 L764.01 189.72 L768.28 190.40 L772.50 191.11 L776.68 191.86 L780.80 192.64 L784.88 193.46 L788.89 194.32 L792.86 195.21 L796.77 196.14 L800.62 197.10 L804.41 198.09 L808.14 199.12 L811.81 200.18 L815.41 201.28 L818.95 202.41 L822.43 203.57 L825.84 204.76 L829.18 205.98 L832.45 207.23 L835.65 208.52 L838.78 209.83 L841.84 211.18 L844.82 212.55 L847.73 213.95 L850.56 215.38 L853.32 216.84 L856.00 218.33 L858.60 219.84 L861.12 221.38 L863.56 222.94 L865.92 224.53 L868.20 226.14 L870.39 227.78 L872.50 229.44 L874.53 231.12 L876.47 232.82 L878.32 234.55 L880.09 236.30 L881.77 238.07 L883.36 239.85 L884.87 241.66 L886.29 243.48 L887.61 245.33 L888.85 247.19 L890.00 249.06 L891.05 250.95 L892.02 252.86 L892.89 254.78 L893.68 256.72 L894.37 258.67 L894.97 260.63 L895.47 262.60 L895.89 264.58 L896.21 266.58 L896.44 268.58 L896.57 270.59 L896.61 272.61 L896.56 274.64 L896.42 276.68 L896.18 278.72 L895.85 280.76 L895.43 282.82 L894.92 284.87 L894.31 286.93 L893.61 288.99 L892.82 291.05 L891.94 293.11 L890.97 295.18 L889.90 297.24 L888.75 299.30 L887.50 301.36 L886.17 303.42 L884.74 305.47 L883.23 307.52 L881.63 309.57 L879.94 311.61 L878.16 313.64 L876.30 315.67 L874.35 317.69 L872.32 319.70 L870.20 321.70 L868.00 323.69 L865.72 325.67 L863.35 327.64 L860.90 329.60 L858.38 331.54 L855.77 333.48 L853.08 335.39 L850.32 337.30 L847.48 339.19 L812 331.3 Q800.2 328.8 788.3 332.8 Q782.5 336.5 785.9 341.7 L824.06 352.68 L820.61 354.42 L817.10 356.13 L813.53 357.82 L809.89 359.49 L806.19 361.13 L802.42 362.75 L798.60 364.35 L794.72 365.92 L790.78 367.47 L786.79 368.99 L782.74 370.48 L778.64 371.95 L774.49 373.39 L770.29 374.80 L766.04 376.18 L761.75 377.53 L757.40 378.86 L753.02 380.15 L748.59 381.42 L744.12 382.65 L739.61 383.85 L735.07 385.02 L730.48 386.16 L725.87 387.26 L721.22 388.34 L716.54 389.38 L711.83 390.38 L707.09 391.35 L702.33 392.29 L697.54 393.19 L692.73 394.06 L687.90 394.89 L683.05 395.69 L678.18 396.45 L673.29 397.18 L668.39 397.86 L663.48 398.52 L658.56 399.13 L653.63 399.71 L648.69 400.25 L643.74 400.75 L638.80 401.22 L633.85 401.64 L628.90 402.03 L623.95 402.39 L619.00 402.70 L614.06 402.97 L609.12 403.21 L604.20 403.41 L599.28 403.57 L594.38 403.69 L589.49 403.77 L584.61 403.81 L579.75 403.82 L574.91 403.78 L570.10 403.71 L565.30 403.60 L560.53 403.45 L555.78 403.26 L551.06 403.03 L546.37 402.77 L541.70 402.46 L537.08 402.12 L532.48 401.74 L527.92 401.32 L523.40 400.86 L518.91 400.37 L514.47 399.84 L510.07 399.27 L505.71 398.66 L501.39 398.02 L497.13 397.34 L492.91 396.62 L488.74 395.87 L484.62 395.08 L480.55 394.26 L476.53 393.40 L472.58 392.50 L468.67 391.57 L464.83 390.61 L461.04 389.61 L457.32 388.58 L453.66 387.52 L450.06 386.42 L446.52 385.29 L443.05 384.12 L439.65 382.93 L436.32 381.70 L433.05 380.45 L429.86 379.16 L426.73 377.84 L423.68 376.50 L420.70 375.12 L417.80 373.71 L414.98 372.28 L412.23 370.82 L409.56 369.33 L406.96 367.82 L404.45 366.28 L402.02 364.71 L399.67 363.12 L397.40 361.51 L395.21 359.87 L393.11 358.21 L391.09 356.52 L389.16 354.82 L387.31 353.09 L385.55 351.34 L383.88 349.57 L382.29 347.78 L380.79 345.97 L379.39 344.15 L378.07 342.30 L376.84 340.44 L375.70 338.56 L374.65 336.67 L373.69 334.76 L372.83 332.84 L372.05 330.90 L371.37 328.95 L370.78 326.99 L370.28 325.02 L369.88 323.03 L369.57 321.04 L369.35 319.03 L369.22 317.02 L369.19 315.00 L369.25 312.97 L369.40 310.93 L369.64 308.89 L369.98 306.85 L370.41 304.79 L370.93 302.74 L371.55 300.68 L372.26 298.62 L373.06 296.56 L373.95 294.49 L374.93 292.43 L376.00 290.37 L377.17 288.31 L378.42 286.25 L379.76 284.19 L381.19 282.14 L382.72 280.09 L384.33 278.04 L386.02 276.00 L387.81 273.97 L389.68 271.94 L391.63 269.93 L393.67 267.92 L395.80 265.92 L398.01 263.93 L400.30 261.95 L402.67 259.98 L405.13 258.02 L407.66 256.08 L410.28 254.15 L412.97 252.23 L415.74 250.33 L418.59 248.44 L453.8 257.6 L467.5 257.6 Q479.5 256.1 481.9 250.5 Q483 247 477.5 245.2 Z" transform="translate(0 4)" fill="none" stroke="#f5a200" stroke-width="1"/>
<path d="M441.43 235.28 L444.87 233.54 L448.37 231.83 L451.94 230.14 L455.57 228.47 L459.27 226.82 L463.02 225.20 L466.84 223.60 L470.71 222.03 L474.65 220.48 L478.63 218.95 L482.68 217.46 L486.77 215.99 L490.92 214.55 L495.12 213.13 L499.36 211.75 L503.65 210.39 L507.99 209.06 L512.37 207.77 L516.80 206.50 L521.26 205.26 L525.77 204.06 L530.31 202.89 L534.89 201.75 L539.50 200.64 L544.15 199.56 L548.82 198.52 L553.53 197.51 L558.27 196.54 L563.03 195.59 L567.81 194.69 L572.62 193.82 L577.45 192.98 L582.30 192.18 L587.17 191.42 L592.05 190.69 L596.95 190.00 L601.86 189.34 L606.78 188.72 L611.71 188.14 L616.65 187.60 L621.60 187.09 L626.54 186.62 L631.49 186.19 L636.44 185.80 L641.39 185.45 L646.34 185.13 L651.28 184.85 L656.22 184.61 L661.14 184.41 L666.06 184.25 L670.97 184.12 L675.86 184.04 L680.74 183.99 L685.60 183.98 L690.44 184.01 L695.26 184.08 L700.06 184.19 L704.83 184.34 L709.58 184.52 L714.31 184.75 L719.00 185.01 L723.66 185.31 L728.30 185.65 L732.89 186.02 L737.46 186.44 L741.98 186.89 L746.47 187.38 L750.92 187.91 L755.33 188.48 L759.69 189.08 L764.01 189.72 L768.28 190.40 L772.50 191.11 L776.68 191.86 L780.80 192.64 L784.88 193.46 L788.89 194.32 L792.86 195.21 L796.77 196.14 L800.62 197.10 L804.41 198.09 L808.14 199.12 L811.81 200.18 L815.41 201.28 L818.95 202.41 L822.43 203.57 L825.84 204.76 L829.18 205.98 L832.45 207.23 L835.65 208.52 L838.78 209.83 L841.84 211.18 L844.82 212.55 L847.73 213.95 L850.56 215.38 L853.32 216.84 L856.00 218.33 L858.60 219.84 L861.12 221.38 L863.56 222.94 L865.92 224.53 L868.20 226.14 L870.39 227.78 L872.50 229.44 L874.53 231.12 L876.47 232.82 L878.32 234.55 L880.09 236.30 L881.77 238.07 L883.36 239.85 L884.87 241.66 L886.29 243.48 L887.61 245.33 L888.85 247.19 L890.00 249.06 L891.05 250.95 L892.02 252.86 L892.89 254.78 L893.68 256.72 L894.37 258.67 L894.97 260.63 L895.47 262.60 L895.89 264.58 L896.21 266.58 L896.44 268.58 L896.57 270.59 L896.61 272.61 L896.56 274.64 L896.42 276.68 L896.18 278.72 L895.85 280.76 L895.43 282.82 L894.92 284.87 L894.31 286.93 L893.61 288.99 L892.82 291.05 L891.94 293.11 L890.97 295.18 L889.90 297.24 L888.75 299.30 L887.50 301.36 L886.17 303.42 L884.74 305.47 L883.23 307.52 L881.63 309.57 L879.94 311.61 L878.16 313.64 L876.30 315.67 L874.35 317.69 L872.32 319.70 L870.20 321.70 L868.00 323.69 L865.72 325.67 L863.35 327.64 L860.90 329.60 L858.38 331.54 L855.77 333.48 L853.08 335.39 L850.32 337.30 L847.48 339.19 L812 331.3 Q800.2 328.8 788.3 332.8 Q782.5 336.5 785.9 341.7 L824.06 352.68 L820.61 354.42 L817.10 356.13 L813.53 357.82 L809.89 359.49 L806.19 361.13 L802.42 362.75 L798.60 364.35 L794.72 365.92 L790.78 367.47 L786.79 368.99 L782.74 370.48 L778.64 371.95 L774.49 373.39 L770.29 374.80 L766.04 376.18 L761.75 377.53 L757.40 378.86 L753.02 380.15 L748.59 381.42 L744.12 382.65 L739.61 383.85 L735.07 385.02 L730.48 386.16 L725.87 387.26 L721.22 388.34 L716.54 389.38 L711.83 390.38 L707.09 391.35 L702.33 392.29 L697.54 393.19 L692.73 394.06 L687.90 394.89 L683.05 395.69 L678.18 396.45 L673.29 397.18 L668.39 397.86 L663.48 398.52 L658.56 399.13 L653.63 399.71 L648.69 400.25 L643.74 400.75 L638.80 401.22 L633.85 401.64 L628.90 402.03 L623.95 402.39 L619.00 402.70 L614.06 402.97 L609.12 403.21 L604.20 403.41 L599.28 403.57 L594.38 403.69 L589.49 403.77 L584.61 403.81 L579.75 403.82 L574.91 403.78 L570.10 403.71 L565.30 403.60 L560.53 403.45 L555.78 403.26 L551.06 403.03 L546.37 402.77 L541.70 402.46 L537.08 402.12 L532.48 401.74 L527.92 401.32 L523.40 400.86 L518.91 400.37 L514.47 399.84 L510.07 399.27 L505.71 398.66 L501.39 398.02 L497.13 397.34 L492.91 396.62 L488.74 395.87 L484.62 395.08 L480.55 394.26 L476.53 393.40 L472.58 392.50 L468.67 391.57 L464.83 390.61 L461.04 389.61 L457.32 388.58 L453.66 387.52 L450.06 386.42 L446.52 385.29 L443.05 384.12 L439.65 382.93 L436.32 381.70 L433.05 380.45 L429.86 379.16 L426.73 377.84 L423.68 376.50 L420.70 375.12 L417.80 373.71 L414.98 372.28 L412.23 370.82 L409.56 369.33 L406.96 367.82 L404.45 366.28 L402.02 364.71 L399.67 363.12 L397.40 361.51 L395.21 359.87 L393.11 358.21 L391.09 356.52 L389.16 354.82 L387.31 353.09 L385.55 351.34 L383.88 349.57 L382.29 347.78 L380.79 345.97 L379.39 344.15 L378.07 342.30 L376.84 340.44 L375.70 338.56 L374.65 336.67 L373.69 334.76 L372.83 332.84 L372.05 330.90 L371.37 328.95 L370.78 326.99 L370.28 325.02 L369.88 323.03 L369.57 321.04 L369.35 319.03 L369.22 317.02 L369.19 315.00 L369.25 312.97 L369.40 310.93 L369.64 308.89 L369.98 306.85 L370.41 304.79 L370.93 302.74 L371.55 300.68 L372.26 298.62 L373.06 296.56 L373.95 294.49 L374.93 292.43 L376.00 290.37 L377.17 288.31 L378.42 286.25 L379.76 284.19 L381.19 282.14 L382.72 280.09 L384.33 278.04 L386.02 276.00 L387.81 273.97 L389.68 271.94 L391.63 269.93 L393.67 267.92 L395.80 265.92 L398.01 263.93 L400.30 261.95 L402.67 259.98 L405.13 258.02 L407.66 256.08 L410.28 254.15 L412.97 252.23 L415.74 250.33 L418.59 248.44 L453.8 257.6 L467.5 257.6 Q479.5 256.1 481.9 250.5 Q483 247 477.5 245.2 Z" fill="none" stroke="#1ec81a" stroke-width="1.1"/>
<ellipse cx="634.2" cy="297.0" rx="157.3" ry="68.2" transform="rotate(-3.66 634.2 297.0)" fill="#9a9200"/>
<ellipse cx="634.2" cy="297.0" rx="157.3" ry="68.2" transform="rotate(-3.66 634.2 297.0)" fill="url(#hiA)"/>
<ellipse cx="634.2" cy="297.0" rx="157.3" ry="68.2" transform="rotate(-3.66 634.2 297.0)" fill="url(#dkA)"/>
<ellipse cx="634.5" cy="299.5" rx="158.10000000000002" ry="67.7" transform="rotate(-3.66 634.5 299.5)" fill="none" stroke="#f5a200" stroke-width="1"/>
<ellipse cx="634.2" cy="297.0" rx="157.3" ry="68.2" transform="rotate(-3.66 634.2 297.0)" fill="none" stroke="#1ec81a" stroke-width="1"/>
<ellipse cx="634.2" cy="297.8" rx="155.8" ry="66.2" transform="rotate(-3.66 634.2 297.8)" fill="none" stroke="#1ec81a" stroke-width="0.8"/>
<ellipse cx="635.5" cy="308.0" rx="134.5" ry="52" transform="rotate(-5 635.5 308.0)" fill="#9a9200"/>
<ellipse cx="635.5" cy="308.0" rx="134.5" ry="52" transform="rotate(-5 635.5 308.0)" fill="url(#hiB)"/>
<ellipse cx="635.5" cy="308.0" rx="134.5" ry="52" transform="rotate(-5 635.5 308.0)" fill="url(#dkB)"/>
<ellipse cx="635.8" cy="310.0" rx="136.0" ry="52" transform="rotate(-5 635.8 310.0)" fill="none" stroke="#f5a200" stroke-width="1"/>
<ellipse cx="635.5" cy="308.0" rx="134.5" ry="52" transform="rotate(-5 635.5 308.0)" fill="none" stroke="#1ec81a" stroke-width="1"/>
<ellipse cx="635.3" cy="319.5" rx="109.7" ry="45.2" transform="rotate(-5.61 635.3 319.5)" fill="#979000"/>
<ellipse cx="635.5999999999999" cy="321.5" rx="110.7" ry="45.2" transform="rotate(-5.61 635.5999999999999 321.5)" fill="none" stroke="#f5a200" stroke-width="1"/>
<ellipse cx="635.3" cy="319.5" rx="109.7" ry="45.2" transform="rotate(-5.61 635.3 319.5)" fill="none" stroke="#1ec81a" stroke-width="1"/>
<ellipse cx="635.2" cy="318.5" rx="62.5" ry="25" transform="rotate(-5 635.2 318.5)" fill="#9a9400"/>
<ellipse cx="635.5" cy="320.5" rx="63.0" ry="25" transform="rotate(-5 635.5 320.5)" fill="none" stroke="#f5a200" stroke-width="1"/>
<ellipse cx="635.2" cy="318.5" rx="62.5" ry="25" transform="rotate(-5 635.2 318.5)" fill="none" stroke="#1ec81a" stroke-width="1"/>
<ellipse cx="634.3" cy="314.5" rx="54" ry="20.5" transform="rotate(-6 634.3 314.5)" fill="url(#cone)"/>
<clipPath id="gclip"><ellipse cx="634.3" cy="314.5" rx="54" ry="20.5" transform="rotate(-6 634.3 314.5)" /></clipPath>
<g clip-path="url(#gclip)"><ellipse cx="676" cy="311" rx="24" ry="22" transform="rotate(-10 676 311)" fill="url(#dark)"/></g>
<ellipse cx="621" cy="338" rx="16" ry="3.5" transform="rotate(0 621 338)" fill="url(#glow)"/>
<ellipse cx="632.8" cy="315.0" rx="51" ry="18.5" transform="rotate(-6 632.8 315.0)" fill="none" stroke="#f5a200" stroke-width="1"/>
<ellipse cx="634.3" cy="314.5" rx="54" ry="20.5" transform="rotate(-6 634.3 314.5)" fill="none" stroke="#1ec81a" stroke-width="1"/>
<ellipse cx="634" cy="294.5" rx="47.2" ry="19.1" transform="rotate(-4 634 294.5)" fill="#a89400"/>
<ellipse cx="634.3" cy="296.5" rx="47.7" ry="19.1" transform="rotate(-4 634.3 296.5)" fill="none" stroke="#f5a200" stroke-width="1"/>
<ellipse cx="634" cy="294.5" rx="47.2" ry="19.1" transform="rotate(-4 634 294.5)" fill="none" stroke="#1ec81a" stroke-width="1"/>
<ellipse cx="634.1" cy="294.8" rx="42.400000000000006" ry="16.200000000000003" transform="rotate(-4 634.1 294.8)" fill="#c88c00" stroke="#1ec81a" stroke-width="1"/>
<ellipse cx="634.3" cy="296.8" rx="42.900000000000006" ry="16.200000000000003" transform="rotate(-4 634.3 296.8)" fill="none" stroke="#f5a200" stroke-width="1"/>
<ellipse cx="634" cy="296.0" rx="36.2" ry="12.600000000000001" transform="rotate(-4 634 296.0)" fill="url(#wall)" stroke="#1ec81a" stroke-width="1"/>
<ellipse cx="634.3" cy="297.8" rx="36.7" ry="12.600000000000001" transform="rotate(-4 634.3 297.8)" fill="none" stroke="#f5a200" stroke-width="1"/>
<path d="M600.6 303.8 Q630 296 664 296 Q656 306.5 630 308.5 Q610 309 600.6 303.8 Z" fill="#e8e9ed"/>
<path d="M603 300.8 Q630 293 662 293" fill="none" stroke="#e8a838" stroke-width="2.2"/>
<path d="M600.6 303.8 Q630 296 664 296" fill="none" stroke="#1ec81a" stroke-width="1"/>
<path d="M600.6 303.8 Q610 309 630 308.5 Q656 306.5 664 296" fill="none" stroke="#1ec81a" stroke-width="1"/>
<g stroke="#2a0a5a" stroke-width="1" fill="none"><path d="M629 297 L577 325.5"/><path d="M582 322.8 L589 394.8 L623 394.8"/></g>
<rect x="628.5" y="289.5" width="8" height="8" fill="#fff" stroke="#111" stroke-width="1.2"/>
<path d="M630.9 389.6 L633.3000000000001 389.6 L634.6 391.1 L634.6 397.8 L633.3000000000001 399.3 L630.9 399.3 L629.6 397.8 L629.6 391.1 Z" fill="none" stroke="#2a0a6a" stroke-width="1.1"/>
<path d="M644.0 389.6 L646.4000000000001 389.6 L647.7 391.1 L647.7 397.8 L646.4000000000001 399.3 L644.0 399.3 L642.7 397.8 L642.7 391.1 Z" fill="none" stroke="#2a0a6a" stroke-width="1.1"/>
<path d="M652.0 389.6 L654.4000000000001 389.6 L655.7 391.1 L655.7 397.8 L654.4000000000001 399.3 L652.0 399.3 L650.7 397.8 L650.7 391.1 Z" fill="none" stroke="#2a0a6a" stroke-width="1.1"/>
<path d="M661.0999999999999 389.6 L663.5 389.6 L664.8 391.1 L664.8 397.8 L663.5 399.3 L661.0999999999999 399.3 L659.8 397.8 L659.8 391.1 Z" fill="none" stroke="#2a0a6a" stroke-width="1.1"/>
<rect x="639" y="398.5" width="1.3" height="1.3" fill="#2a0a6a"/>
<path d="M986.5 98 L991.5 98 L1003.5 243 L1000.5 243 Z" fill="#b43ede"/>
<path d="M464.3 394 L467.3 394 L479.5 532 L476.5 532 Z" fill="#b43ede"/>
<path d="M472.5 530.5 L484.5 529.5 L479.5 544 Z" fill="#b43ede"/>
</svg><div class="a" style="left:763px;top:105px;width:260px;height:31px;background:#f6f6f6;border:1px solid #a9a9a9"></div>
<svg width="1013" height="140" style="left:0;top:0">
  <defs>
    <linearGradient id="vcube" x1="0" y1="0" x2="1" y2="1"><stop offset="0" stop-color="#c6ecfa"/><stop offset="1" stop-color="#7cc6e6"/></linearGradient>
    <linearGradient id="rep" x1="0" y1="0" x2="1" y2="1"><stop offset="0" stop-color="#d6f2fb"/><stop offset="1" stop-color="#4aa6c8"/></linearGradient>
  </defs>
  <!-- zoom fit -->
  <rect x="771.5" y="112.5" width="14" height="14" fill="#f8f8f8" stroke="#a5a5a5" stroke-width="1"/>
  <line x1="771" y1="112.8" x2="786" y2="112.8" stroke="#a0a0a0" stroke-width="1.5"/>
  <line x1="781.5" y1="123" x2="786" y2="127.5" stroke="#8c8c8c" stroke-width="2.8" stroke-linecap="round"/>
  <line x1="781.5" y1="123" x2="786" y2="127.5" stroke="#e8e8e8" stroke-width="1.2" stroke-linecap="round"/>
  <circle cx="778.4" cy="119.2" r="4.3" fill="#e6f6fc" stroke="#3f8fb5" stroke-width="1.3"/>
  <!-- zoom in -->
  <line x1="806.5" y1="122" x2="811.5" y2="127.5" stroke="#8c8c8c" stroke-width="2.8" stroke-linecap="round"/>
  <line x1="806.5" y1="122" x2="811.5" y2="127.5" stroke="#e8e8e8" stroke-width="1.2" stroke-linecap="round"/>
  <circle cx="802.9" cy="118" r="5.4" fill="#eef8fc" stroke="#3f8fb5" stroke-width="1.3"/>
  <path d="M800 118 L805.8 118 M802.9 115.1 L802.9 120.9" stroke="#16628e" stroke-width="2"/>
  <!-- zoom out -->
  <line x1="832.5" y1="122" x2="837.5" y2="127.5" stroke="#8c8c8c" stroke-width="2.8" stroke-linecap="round"/>
  <line x1="832.5" y1="122" x2="837.5" y2="127.5" stroke="#e8e8e8" stroke-width="1.2" stroke-linecap="round"/>
  <circle cx="829" cy="118" r="5.4" fill="#eef8fc" stroke="#3f8fb5" stroke-width="1.3"/>
  <path d="M826 118 L832 118" stroke="#16628e" stroke-width="2"/>
  <!-- repaint -->
  <rect x="850" y="113" width="14.5" height="14" fill="url(#rep)" stroke="#a0a0a0" stroke-width="1"/>
  <line x1="849.5" y1="113.2" x2="865" y2="113.2" stroke="#9a9a9a" stroke-width="1.6"/>
  <path d="M850.5 117 Q857 114 860 119 L852 126.5 L850.5 126.5 Z" fill="#ffffff"/>
  <line x1="853" y1="126" x2="861.5" y2="118" stroke="#1a5f80" stroke-width="1.4"/>
  <path d="M851.5 126.5 L855 126.5 L853.5 124.5 Z" fill="#1a5f80"/>
  <!-- cube 1 -->
  <path d="M875.5 116 L878.5 112.5 L891 112.5 L888 116 Z" fill="#b8e6f8" stroke="#7cc4e4" stroke-width=".8"/>
  <path d="M888 116 L891 112.5 L891 124 L888 127.5 Z" fill="#6cb8dc" stroke="#6cb8dc" stroke-width=".8"/>
  <rect x="875.5" y="116" width="12.5" height="11.5" fill="#fff" stroke="#78c2e4" stroke-width="1"/>
  <path d="M891.5 129.5 L894 127 L894 129.5 Z" fill="#555"/>
  <!-- cube 2 -->
  <path d="M902 116 L905 112.5 L917 112.5 L914 116 Z" fill="#b8e6f8" stroke="#7cc4e4" stroke-width=".8"/>
  <path d="M914 116 L917 112.5 L917 124 L914 127.5 Z" fill="#6cb8dc"/>
  <rect x="902" y="116" width="12" height="11" fill="#fff" stroke="#78c2e4" stroke-width="1"/>
  <rect x="910.5" y="119.5" width="7.5" height="8" fill="#f4f4f4" stroke="#9a9a9a" stroke-width=".9"/>
  <g stroke="#777" stroke-width=".8"><path d="M912 121.5 L916.5 121.5 M912 123.5 L916.5 123.5 M912 125.5 L916.5 125.5"/></g>
  <path d="M918.5 129.5 L921 127 L921 129.5 Z" fill="#555"/>
  <!-- table + camera -->
  <rect x="929" y="112.5" width="13.5" height="13.5" fill="#fafafa" stroke="#9c9c9c" stroke-width=".9"/>
  <g stroke="#aaa" stroke-width=".8"><path d="M929 115.5 L942.5 115.5 M929 118.5 L942.5 118.5 M929 121.5 L942.5 121.5 M929 124.5 L942.5 124.5 M932 112.5 L932 126"/></g>
  <rect x="934" y="121" width="11" height="6.8" rx="1" fill="#4a4a4a" stroke="#222" stroke-width=".6"/>
  <rect x="937" y="119.8" width="4" height="2" fill="#333"/>
  <circle cx="939.5" cy="124.3" r="2.3" fill="#888" stroke="#111" stroke-width=".8"/>
  <!-- datum display -->
  <g stroke="#7a5a1a" stroke-width="1.3" fill="none">
    <path d="M955 112.5 L959.5 116.8 M959.5 112.5 L955 116.8"/>
    <path d="M965 112.5 L963.5 115.5 M961.5 119 L960 122 M958.5 125 L957.2 127.5"/>
    <path d="M962.5 123 L970.5 123 M970 117 L964.5 128 M964 117 L969 128"/>
  </g>
  <path d="M971.5 130 L974 127.5 L974 130 Z" fill="#555"/>
  <!-- node -->
  <g stroke="#3a3a3a" stroke-width=".9" fill="none" stroke-linejoin="round"><path d="M986.5 116.5 L990 120.5 L986.5 124.5 M990 120.5 L994 120.5"/></g>
  <circle cx="985.5" cy="115.3" r="2.6" fill="#7fb87a" stroke="#5a9456" stroke-width=".6"/>
  <circle cx="995.4" cy="120.5" r="2.6" fill="#e8807a" stroke="#c45a54" stroke-width=".6"/>
  <circle cx="985.5" cy="125.4" r="2.6" fill="#4a94c4" stroke="#2f72a0" stroke-width=".6"/>
  <!-- partial icon -->
  <rect x="1008.5" y="112.5" width="8" height="6" fill="#fff4dc" stroke="#9a9a9a" stroke-width=".9"/>
</svg>
</body></html>
